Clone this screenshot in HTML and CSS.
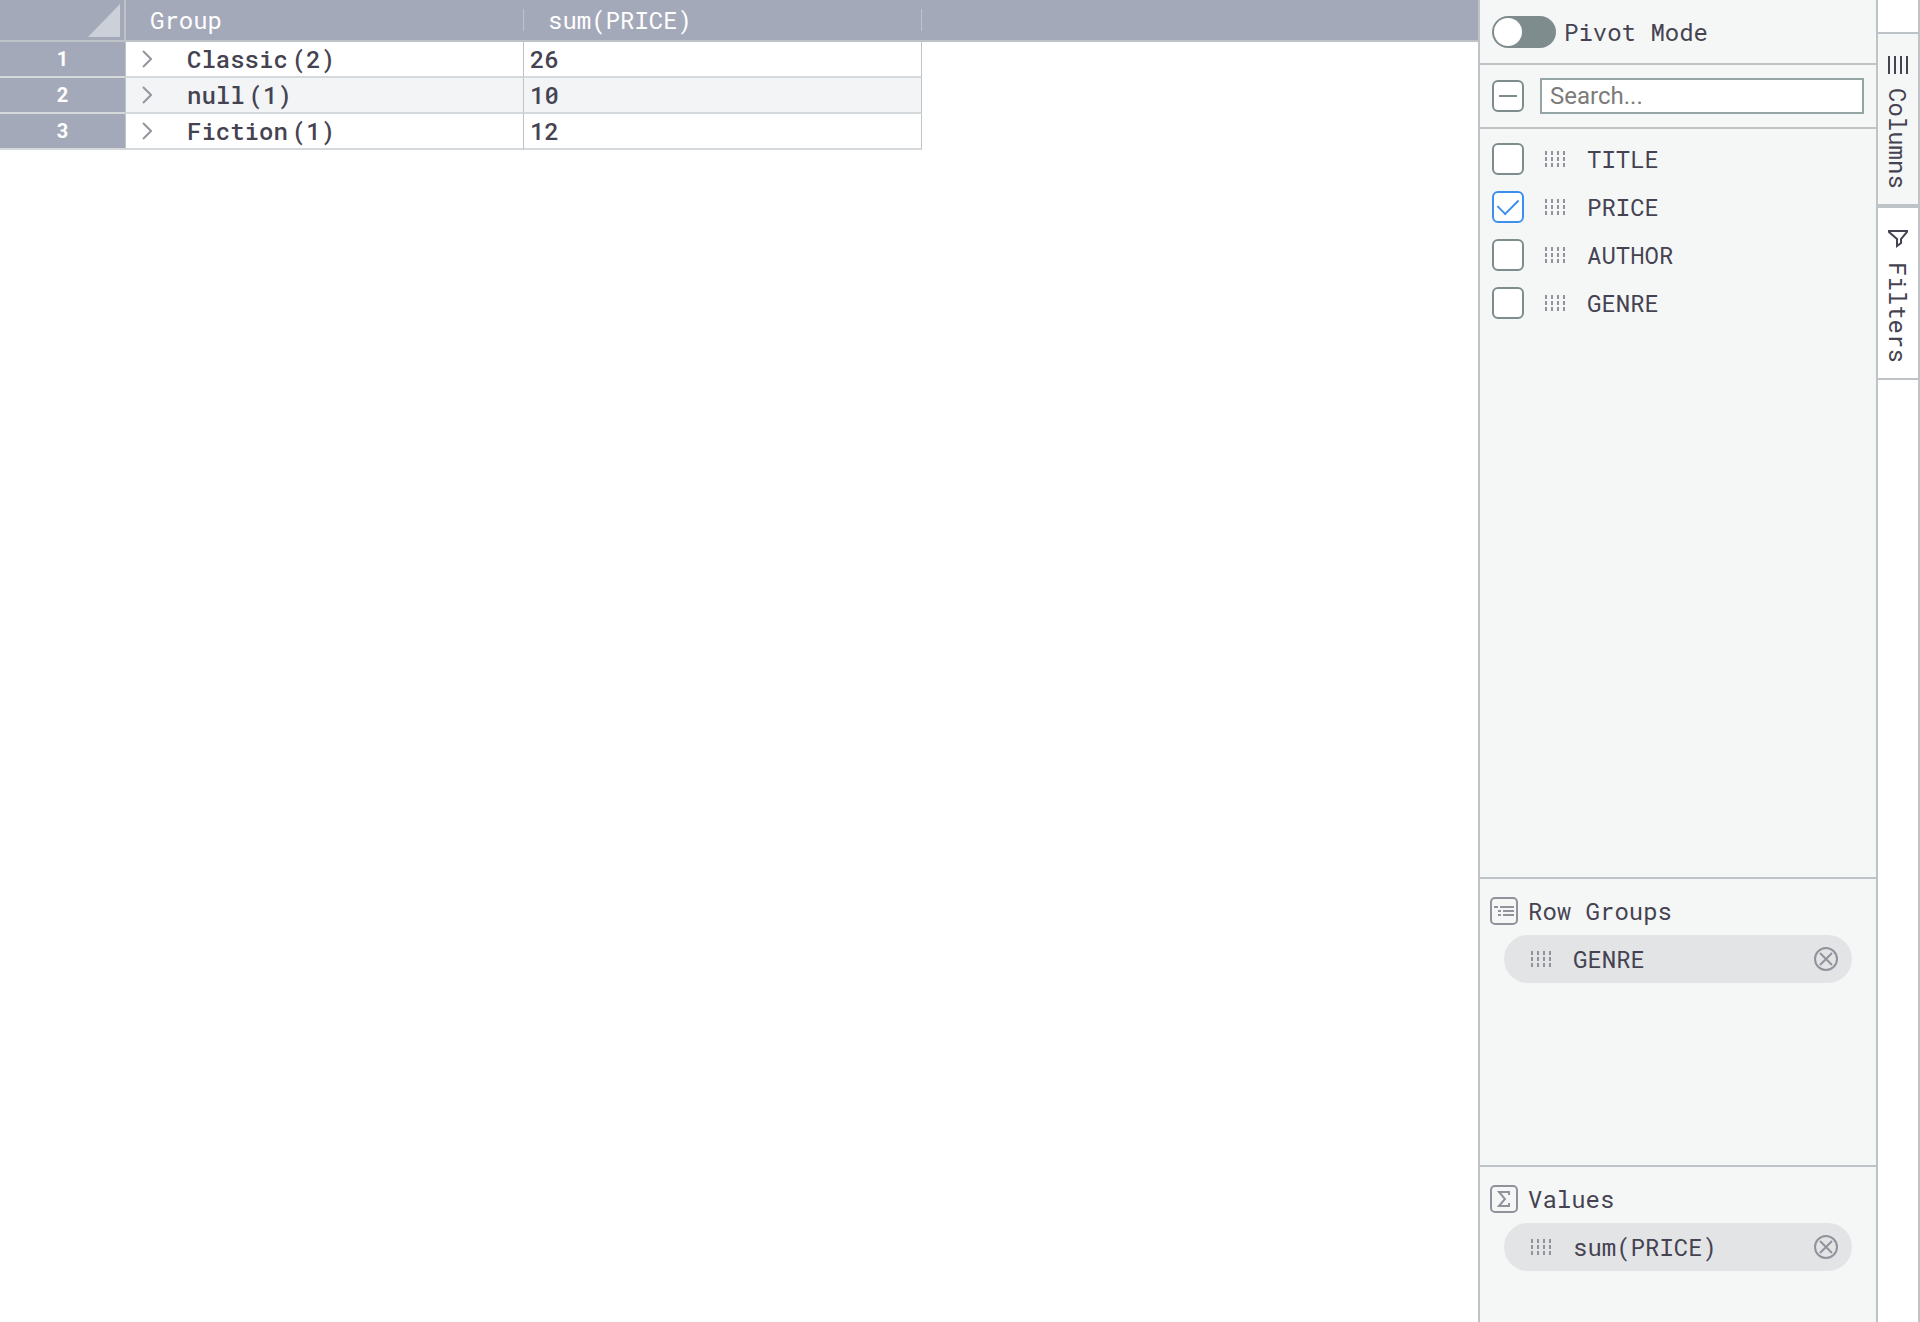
FILE: index.html
```html
<!DOCTYPE html>
<html lang="en">
<head>
    <meta charset="UTF-8">
    <meta name="viewport" content="width=device-width, initial-scale=1.0">
    <title>Books</title>
    <link rel="stylesheet" href="styles.css">
</head>
<body>

<!-- shared icons -->
<svg class="sprite" aria-hidden="true">
    <symbol id="grip" viewBox="0 0 22 18">
        <path d="M2 1v4M8 1v4M14 1v4M20 1v4M2 7v4M8 7v4M14 7v4M20 7v4M2 13v4M8 13v4M14 13v4M20 13v4" stroke="currentColor" stroke-width="2"/>
    </symbol>
    <symbol id="chevron" viewBox="0 0 10 18">
        <path d="M1 1l8 8-8 8" fill="none" stroke="currentColor" stroke-width="2"/>
    </symbol>
    <symbol id="remove" viewBox="0 0 24 24">
        <circle cx="12" cy="12" r="11" fill="none" stroke="currentColor" stroke-width="2"/>
        <path d="M6 6l12 12M18 6L6 18" stroke="currentColor" stroke-width="2"/>
    </symbol>
</svg>

<div class="grid">
    <main class="grid-body">
        <table>
            <colgroup>
                <col class="col-num">
                <col class="col-group">
                <col class="col-value">
                <col>
            </colgroup>
            <thead>
                <tr>
                    <th class="corner"><svg width="32" height="33" viewBox="0 0 32 33"><path d="M32 0v33H0z" fill="#cbd0d9"/></svg></th>
                    <th class="col-title" scope="col">Group</th>
                    <th class="col-title" scope="col">sum(PRICE)</th>
                    <th></th>
                </tr>
            </thead>
            <tbody>
                <tr>
                    <th scope="row">1</th>
                    <td class="group"><div class="group-cell"><button class="expand" aria-label="Expand Classic"><svg width="10" height="18"><use href="#chevron"/></svg></button><span>Classic</span><span class="count">(2)</span></div></td>
                    <td class="value">26</td>
                    <td class="filler"></td>
                </tr>
                <tr>
                    <th scope="row">2</th>
                    <td class="group"><div class="group-cell"><button class="expand" aria-label="Expand null"><svg width="10" height="18"><use href="#chevron"/></svg></button><span>null</span><span class="count">(1)</span></div></td>
                    <td class="value">10</td>
                    <td class="filler"></td>
                </tr>
                <tr>
                    <th scope="row">3</th>
                    <td class="group"><div class="group-cell"><button class="expand" aria-label="Expand Fiction"><svg width="10" height="18"><use href="#chevron"/></svg></button><span>Fiction</span><span class="count">(1)</span></div></td>
                    <td class="value">12</td>
                    <td class="filler"></td>
                </tr>
            </tbody>
        </table>
    </main>

    <aside class="panel">
        <div class="pivot">
            <input type="checkbox" class="toggle" id="pivot">
            <label for="pivot">Pivot Mode</label>
        </div>
        <div class="search">
            <input type="checkbox" class="check some" aria-label="Select all columns">
            <input type="text" class="search-box" placeholder="Search..." aria-label="Search columns">
        </div>
        <ul class="columns">
            <li><input type="checkbox" class="check" id="title"><svg class="grip" width="22" height="18"><use href="#grip"/></svg><label for="title">TITLE</label></li>
            <li><input type="checkbox" class="check" id="price" checked><svg class="grip" width="22" height="18"><use href="#grip"/></svg><label for="price">PRICE</label></li>
            <li><input type="checkbox" class="check" id="author"><svg class="grip" width="22" height="18"><use href="#grip"/></svg><label for="author">AUTHOR</label></li>
            <li><input type="checkbox" class="check" id="genre"><svg class="grip" width="22" height="18"><use href="#grip"/></svg><label for="genre">GENRE</label></li>
        </ul>
        <section class="drop row-groups">
            <h2>
                <svg class="icon" width="28" height="28" viewBox="0 0 28 28" fill="none" stroke="currentColor" stroke-width="2">
                    <rect x="1" y="1" width="26" height="26" rx="4"/>
                    <path d="M4 10h4M10 10h14M8 14h3M13 14h11M8 18h3M13 18h11"/>
                </svg>
                Row Groups
            </h2>
            <div class="chip">
                <svg class="grip" width="22" height="18"><use href="#grip"/></svg>
                <span>GENRE</span>
                <button class="remove" aria-label="Remove GENRE"><svg width="24" height="24"><use href="#remove"/></svg></button>
            </div>
        </section>
        <section class="drop values">
            <h2>
                <svg class="icon" width="28" height="28" viewBox="0 0 28 28" fill="none" stroke="currentColor" stroke-width="2">
                    <rect x="1" y="1" width="26" height="26" rx="4"/>
                    <path d="M19 10V7H9l6 7-6 7h10v-3"/>
                </svg>
                Values
            </h2>
            <div class="chip">
                <svg class="grip" width="22" height="18"><use href="#grip"/></svg>
                <span>sum(PRICE)</span>
                <button class="remove" aria-label="Remove sum(PRICE)"><svg width="24" height="24"><use href="#remove"/></svg></button>
            </div>
        </section>
    </aside>

    <nav class="tabs">
        <button class="tab active">
            <svg width="20" height="18" viewBox="0 0 20 18"><path d="M1 0v18M7 0v18M13 0v18M19 0v18" stroke="currentColor" stroke-width="2"/></svg>
            <span>Columns</span>
        </button>
        <button class="tab">
            <svg width="20" height="18" viewBox="0 0 20 18"><path d="M1 1h18v1l-6 7v4l-4 3V9L1 2z" fill="none" stroke="currentColor" stroke-width="2"/></svg>
            <span>Filters</span>
        </button>
    </nav>
</div>

</body>
</html>
```
FILE: styles.css
```css
* {
    box-sizing: border-box;
}
body {
    margin: 0;
    background: #fff;
    color: #454352;
    font: 24px/32px "Roboto Mono", "DejaVu Sans Mono", monospace;
}
button {
    padding: 0;
    border: none;
    background: none;
    color: inherit;
    font: inherit;
    cursor: pointer;
}
input {
    margin: 0;
}
svg {
    display: block;
    flex: none;
}
.sprite {
    position: absolute;
    width: 0;
    height: 0;
}
.grid {
    display: flex;
    min-height: 100vh;
}
.grid-body {
    flex: 1;
    min-width: 0;
}

/* table */
table {
    width: 100%;
    table-layout: fixed;
    border-collapse: separate;
    border-spacing: 0;
}
.col-num {
    width: 126px;
}
.col-group,
.col-value {
    width: 398px;
}
th,
td {
    height: 36px;
    padding: 0;
    text-align: left;
}
th {
    background-color: #a4a9ba;
    color: #fff;
    font-weight: normal;
}
td {
    font-weight: 500;
}
thead th {
    height: 42px;
    border-bottom: 2px solid #bdc3c7;
}
.corner {
    padding-left: 88px;
    border-right: 2px solid #bdc3c7;
}
.col-title {
    padding-left: 24px;
    background-image: linear-gradient(#bdc3c7, #bdc3c7);
    background-repeat: no-repeat;
    background-position: right center;
    background-size: 1px 22px;
}
tbody th {
    border-bottom: 2px solid #d5d9dc;
    border-right: 1px solid #bdc3c7;
    font-family: Roboto, sans-serif;
    font-size: 20px;
    font-weight: bold;
    text-align: center;
}
.group,
.value {
    border-right: 1px solid #bdc3c7;
    border-bottom: 2px solid #d5d9dc;
}
.value {
    padding-left: 6px;
}
tbody tr:nth-child(even) .group,
tbody tr:nth-child(even) .value {
    background: #f2f4f6;
}
.group-cell {
    display: flex;
    align-items: center;
}
.expand {
    margin: 0 35px 0 16px;
    color: #96959f;
}
.count {
    margin-left: 4px;
}

/* side panel */
.panel {
    display: flex;
    flex-direction: column;
    width: 400px;
    border-left: 2px solid #bdc3c7;
    border-right: 2px solid #bdc3c7;
    background: #f5f7f7;
}
.pivot,
.search {
    display: flex;
    align-items: center;
    padding: 0 12px;
    border-bottom: 2px solid #bdc3c7;
}
.pivot {
    gap: 8px;
    height: 65px;
}
.search {
    gap: 16px;
    height: 64px;
}
.toggle {
    appearance: none;
    width: 64px;
    height: 32px;
    padding: 2px;
    border-radius: 16px;
    background: #7f8c8d;
}
.toggle::before {
    content: "";
    display: block;
    width: 28px;
    height: 28px;
    border-radius: 50%;
    background: #fff;
}
.check {
    appearance: none;
    display: grid;
    place-items: center;
    flex: none;
    width: 32px;
    height: 32px;
    border: 2px solid #7f8c8d;
    border-radius: 6px;
    background: #fff;
}
.check:checked {
    border-color: #3d8fee;
}
.check:checked::before {
    content: "";
    width: 10px;
    height: 18px;
    margin-bottom: 6px;
    border: solid #3d8fee;
    border-width: 0 2px 2px 0;
    transform: rotate(45deg);
}
.some::before {
    content: "";
    width: 18px;
    height: 2px;
    background: #7f8c8d;
}
.search-box {
    flex: 1;
    min-width: 0;
    height: 36px;
    padding: 0 8px;
    border: 2px solid #95a5a6;
    background: #fff;
    font: 24px Roboto, sans-serif;
}
.search-box::placeholder {
    color: #7b7b7b;
}
.columns {
    flex: 1;
    margin: 0;
    padding: 6px 12px;
    list-style: none;
}
.columns li {
    display: flex;
    align-items: center;
    height: 48px;
}
.grip {
    margin: 0 21px 0 20px;
    color: #92929c;
}
.drop {
    padding: 14px 24px 0 10px;
    border-top: 2px solid #bdc3c7;
}
.row-groups {
    min-height: 288px;
}
.values {
    min-height: 157px;
}
.drop h2 {
    display: flex;
    align-items: center;
    gap: 10px;
    height: 36px;
    margin: 0 0 6px;
    font-size: 24px;
    font-weight: normal;
}
.icon {
    color: #92929c;
}
.chip {
    display: flex;
    align-items: center;
    height: 48px;
    margin-left: 14px;
    padding: 0 14px 0 6px;
    border-radius: 24px;
    background: #e3e4e6;
}
.remove {
    margin-left: auto;
    color: #92929c;
}

/* tab strip */
.tabs {
    width: 42px;
    padding-top: 32px;
    border-right: 2px solid #bdc3c7;
}
.tab {
    display: flex;
    flex-direction: column;
    align-items: center;
    gap: 14px;
    width: 100%;
    height: 174px;
    padding-top: 22px;
    border-top: 2px solid #bdc3c7;
    border-bottom: 2px solid #bdc3c7;
}
.tab span {
    writing-mode: vertical-rl;
}
.active {
    background: #f5f7f7;
}
```
